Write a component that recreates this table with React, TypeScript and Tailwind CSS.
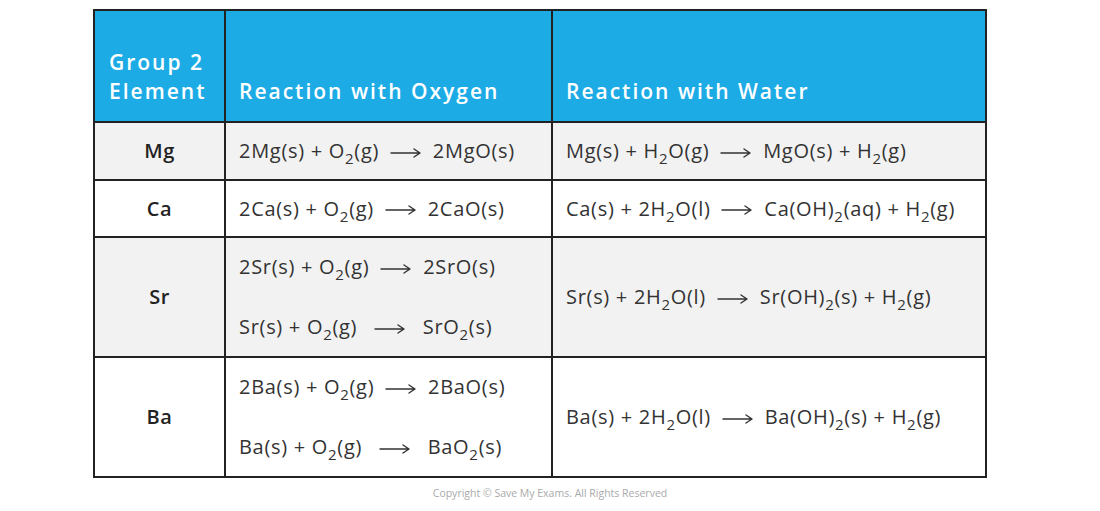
const rows = [
  {
    el: "Mg",
    bg: "bg-[#f2f2f2]",
    h: "h-[58px]",
    oxygen: [
      <>2Mg(s) + O<Sub>2</Sub>(g) <Arrow /> 2MgO(s)</>,
    ],
    water: <>Mg(s) + H<Sub>2</Sub>O(g) <Arrow /> MgO(s) + H<Sub>2</Sub>(g)</>,
  },
  {
    el: "Ca",
    bg: "bg-white",
    h: "h-[57px]",
    oxygen: [
      <>2Ca(s) + O<Sub>2</Sub>(g) <Arrow /> 2CaO(s)</>,
    ],
    water: <>Ca(s) + 2H<Sub>2</Sub>O(l) <Arrow /> Ca(OH)<Sub>2</Sub>(aq) + H<Sub>2</Sub>(g)</>,
  },
  {
    el: "Sr",
    bg: "bg-[#f2f2f2]",
    h: "h-[120px]",
    oxygen: [
      <>2Sr(s) + O<Sub>2</Sub>(g) <Arrow /> 2SrO(s)</>,
      <>Sr(s) + O<Sub>2</Sub>(g) &nbsp;<Arrow />&nbsp; SrO<Sub>2</Sub>(s)</>,
    ],
    water: <>Sr(s) + 2H<Sub>2</Sub>O(l) <Arrow /> Sr(OH)<Sub>2</Sub>(s) + H<Sub>2</Sub>(g)</>,
  },
  {
    el: "Ba",
    bg: "bg-white",
    h: "h-[120px]",
    oxygen: [
      <>2Ba(s) + O<Sub>2</Sub>(g) <Arrow /> 2BaO(s)</>,
      <>Ba(s) + O<Sub>2</Sub>(g) &nbsp;<Arrow />&nbsp; BaO<Sub>2</Sub>(s)</>,
    ],
    water: <>Ba(s) + 2H<Sub>2</Sub>O(l) <Arrow /> Ba(OH)<Sub>2</Sub>(s) + H<Sub>2</Sub>(g)</>,
  },
];

function Sub({ children }: { children: React.ReactNode }) {
  return <sub className="text-[15px] relative top-[6px] bottom-auto">{children}</sub>;
}

function Arrow() {
  return (
    <svg width="32" height="10" viewBox="0 0 32 10" className="inline-block mx-[5px] align-middle">
      <path d="M1 5 H30 M24 1 L30 5 L24 9" stroke="#333" strokeWidth="1.4" fill="none" strokeLinecap="round" strokeLinejoin="round" />
    </svg>
  );
}

export default function App() {
  return (
    <div className="w-[1100px] h-[511px] bg-white pt-[9px] font-['Open_Sans',sans-serif]">
      <div className="pl-[93px]">
        <table className="border-collapse border-2 border-[#222] text-[#333] text-[20px] tracking-[0.7px]">
          <thead>
            <tr className="bg-[#1dabe6] text-white text-[21px] tracking-[2px] h-[112px]">
              <th className="w-[131px] border-2 border-[#222] align-bottom text-left pl-[14px] pb-[15px] leading-[29px] font-semibold">
                Group 2<br />Element
              </th>
              <th className="w-[327px] border-2 border-[#222] align-bottom text-left pl-[13px] pb-[15px] leading-[29px] font-semibold">
                Reaction with Oxygen
              </th>
              <th className="w-[434px] border-2 border-[#222] align-bottom text-left pl-[13px] pb-[15px] leading-[29px] font-semibold">
                Reaction with Water
              </th>
            </tr>
          </thead>
          <tbody>
            {rows.map((r) => (
              <tr key={r.el} className={`${r.bg} ${r.h}`}>
                <td className="border-2 border-[#222] text-center font-semibold text-[20px] tracking-[0.5px] text-[#222]">{r.el}</td>
                <td className="border-2 border-[#222] pl-[13px]">
                  <div className="flex flex-col gap-[30px]">
                    {r.oxygen.map((o, i) => (
                      <div key={i} className="whitespace-nowrap">{o}</div>
                    ))}
                  </div>
                </td>
                <td className="border-2 border-[#222] pl-[13px] whitespace-nowrap">{r.water}</td>
              </tr>
            ))}
          </tbody>
        </table>
      </div>
      <div className="text-center pt-[8px] text-[10.5px] text-[#aaa]">
        Copyright © Save My Exams. All Rights Reserved
      </div>
    </div>
  );
}
